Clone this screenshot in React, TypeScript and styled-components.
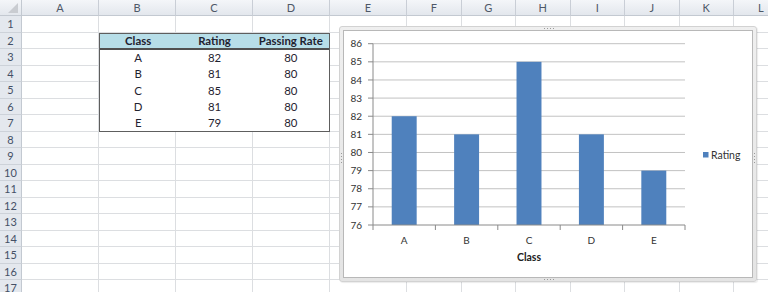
import React from "react";
import styled, { createGlobalStyle } from "styled-components";

const GlobalStyle = createGlobalStyle`
  html, body {
    margin: 0;
    padding: 0;
    background: #fff;
    overflow: hidden;
  }
  body {
    font-family: Lato, "Open Sans", sans-serif;
  }
`;

const COLS = ["A", "B", "C", "D", "E", "F", "G", "H", "I", "J", "K", "L"];
const ROW_COUNT = 17;

const TABLE = [
    {cls: "A", rating: 82, pass: 80},
    {cls: "B", rating: 81, pass: 80},
    {cls: "C", rating: 85, pass: 80},
    {cls: "D", rating: 81, pass: 80},
    {cls: "E", rating: 79, pass: 80},
];

const Sheet = styled.div`
  position: relative;
  display: grid;
  grid-template-columns: 22px repeat(5, 77px) repeat(7, 54.5px);
  grid-template-rows: 16px repeat(${ROW_COUNT}, 16.5px);
  width: 768px;
  height: 292px;
  overflow: hidden;
`;

const Corner = styled.div`
  position: relative;
  box-sizing: border-box;
  background: linear-gradient(#f4f6f9, #e3e7ed);
  border-right: 1px solid #c3c9d1;
  border-bottom: 1px solid #c3c9d1;

  &::after {
    content: "";
    position: absolute;
    right: 3px;
    bottom: 2px;
    border-style: solid;
    border-width: 0 0 10px 10px;
    border-color: transparent transparent #c9ccd1 transparent;
  }
`;

const ColHead = styled.div`
  box-sizing: border-box;
  display: flex;
  align-items: center;
  justify-content: center;
  background: linear-gradient(#f4f6f9, #e3e7ed);
  border-right: 1px solid #c9ced6;
  border-bottom: 1px solid #c3c9d1;
  font-size: 11px;
  color: #4e5868;
`;

const RowHead = styled.div`
  box-sizing: border-box;
  display: flex;
  align-items: center;
  justify-content: center;
  background: #e4e8ee;
  border-right: 1px solid #c3c9d1;
  border-bottom: 1px solid #cdd2d9;
  font-size: 11px;
  color: #445066;
`;

const Cell = styled.div`
  box-sizing: border-box;
  border-right: 1px solid #dcdee1;
  border-bottom: 1px solid #dcdee1;
`;

const DataTable = styled.div`
  grid-column: 3 / 6;
  grid-row: 3 / 9;
  display: grid;
  grid-template-columns: repeat(3, 1fr);
  grid-template-rows: repeat(6, 1fr);
  box-sizing: border-box;
  border: 1px solid #5e5e5e;
  background: #fff;
`;

const TCell = styled.div<{ $head?: boolean }>`
  display: flex;
  align-items: center;
  justify-content: center;
  font-size: 11.4px;
  color: #1f2230;
  font-weight: ${p => (p.$head ? 700 : 400)};
  background: ${p => (p.$head ? "#b7dee8" : "transparent")};
  border-bottom: ${p => (p.$head ? "2px solid #505050" : "none")};
`;

const ChartFrame = styled.div`
  position: absolute;
  left: 339px;
  top: 26px;
  width: 418px;
  height: 256px;
  box-sizing: border-box;
  padding: 3px;
  border: 1px solid #d2d2d2;
  border-radius: 3px;
  background: linear-gradient(#efefef, #e4e4e4);
  box-shadow: 1px 1px 1px rgba(0, 0, 0, 0.08);
`;

const ChartArea = styled.div`
  width: 100%;
  height: 100%;
  box-sizing: border-box;
  background: #fff;
  border: 1px solid #b8b8b8;
`;

const Grip = styled.span<{ $side: "top" | "bottom" | "left" | "right" }>`
  position: absolute;
  background: repeating-linear-gradient(
    ${p => (p.$side === "top" || p.$side === "bottom" ? "90deg" : "0deg")},
    #9a9a9a 0 1px,
    transparent 1px 3px
  );
  ${p => (p.$side === "top" || p.$side === "bottom"
    ? `left: 204px; width: 11px; height: 1px; ${p.$side}: 1px;`
    : `top: 125px; height: 11px; width: 1px; ${p.$side}: 1px;`)}
`;

const Plot = styled.svg`
  display: block;
  font-family: Lato, "Open Sans", sans-serif;
`;

// chart geometry, in page coordinates
const X0 = 373;
const X1 = 685;
const Y_BOTTOM = 225;
const STEP = 18.13;
const CAT = (X1 - X0) / 5;
const BAR = CAT / 2.5;
const yOf = (v: number) => Y_BOTTOM - (v - 76) * STEP;

const Chart = () => {
    const ticks = Array.from({length: 11}, (_, i) => 76 + i);
    return (
        <Plot width={407} height={246} viewBox="344 31 407 246">
            {ticks.map(v => (
                <g key={v}>
                    {v > 76 && <line x1={X0} x2={X1} y1={yOf(v)} y2={yOf(v)} stroke="#c2c2c2" strokeWidth={1}/>}
                    <line x1={X0 - 5} x2={X0} y1={yOf(v)} y2={yOf(v)} stroke="#8a8a8a" strokeWidth={1}/>
                    <text x={362} y={yOf(v) + 3.6} fontSize={10} fill="#333" textAnchor="end">{v}</text>
                </g>
            ))}
            {TABLE.map((d, i) => (
                <rect key={d.cls} x={X0 + i * CAT + (CAT - BAR) / 2} y={yOf(d.rating)}
                      width={BAR} height={Y_BOTTOM - yOf(d.rating)} fill="#4f81bd"/>
            ))}
            <line x1={X0} x2={X0} y1={yOf(86)} y2={Y_BOTTOM} stroke="#8a8a8a" strokeWidth={1}/>
            <line x1={X0} x2={X1} y1={Y_BOTTOM} y2={Y_BOTTOM} stroke="#8a8a8a" strokeWidth={1}/>
            {Array.from({length: 6}, (_, i) => (
                <line key={i} x1={X0 + i * CAT} x2={X0 + i * CAT} y1={Y_BOTTOM} y2={Y_BOTTOM + 5}
                      stroke="#8a8a8a" strokeWidth={1}/>
            ))}
            {TABLE.map((d, i) => (
                <text key={d.cls} x={X0 + i * CAT + CAT / 2} y={243.8} fontSize={10} fill="#333"
                      textAnchor="middle">{d.cls}</text>
            ))}
            <text x={529} y={260.5} fontSize={10.5} fontWeight={700} fill="#222" textAnchor="middle">Class</text>
            <rect x={703} y={152} width={5.5} height={5.5} fill="#4f81bd"/>
            <text x={711} y={158.8} fontSize={10.5} fill="#333">Rating</text>
        </Plot>
    );
};

const inTable = (r: number, c: number) => r >= 2 && r <= 7 && c >= 1 && c <= 3;

export default function App() {
    const rows = Array.from({length: ROW_COUNT}, (_, i) => i + 1);
    return (
        <>
            <GlobalStyle/>
            <Sheet>
                <Corner/>
                {COLS.map(c => <ColHead key={c}>{c}</ColHead>)}
                <DataTable>
                    <TCell $head>Class</TCell>
                    <TCell $head>Rating</TCell>
                    <TCell $head>Passing Rate</TCell>
                    {TABLE.map(d => (
                        <React.Fragment key={d.cls}>
                            <TCell>{d.cls}</TCell>
                            <TCell>{d.rating}</TCell>
                            <TCell>{d.pass}</TCell>
                        </React.Fragment>
                    ))}
                </DataTable>
                {rows.map(r => (
                    <React.Fragment key={r}>
                        <RowHead>{r}</RowHead>
                        {COLS.map((c, ci) => (inTable(r, ci) ? null : <Cell key={c}/>))}
                    </React.Fragment>
                ))}
                <ChartFrame>
                    <Grip $side="top"/>
                    <Grip $side="bottom"/>
                    <Grip $side="left"/>
                    <Grip $side="right"/>
                    <ChartArea>
                        <Chart/>
                    </ChartArea>
                </ChartFrame>
            </Sheet>
        </>
    );
}
